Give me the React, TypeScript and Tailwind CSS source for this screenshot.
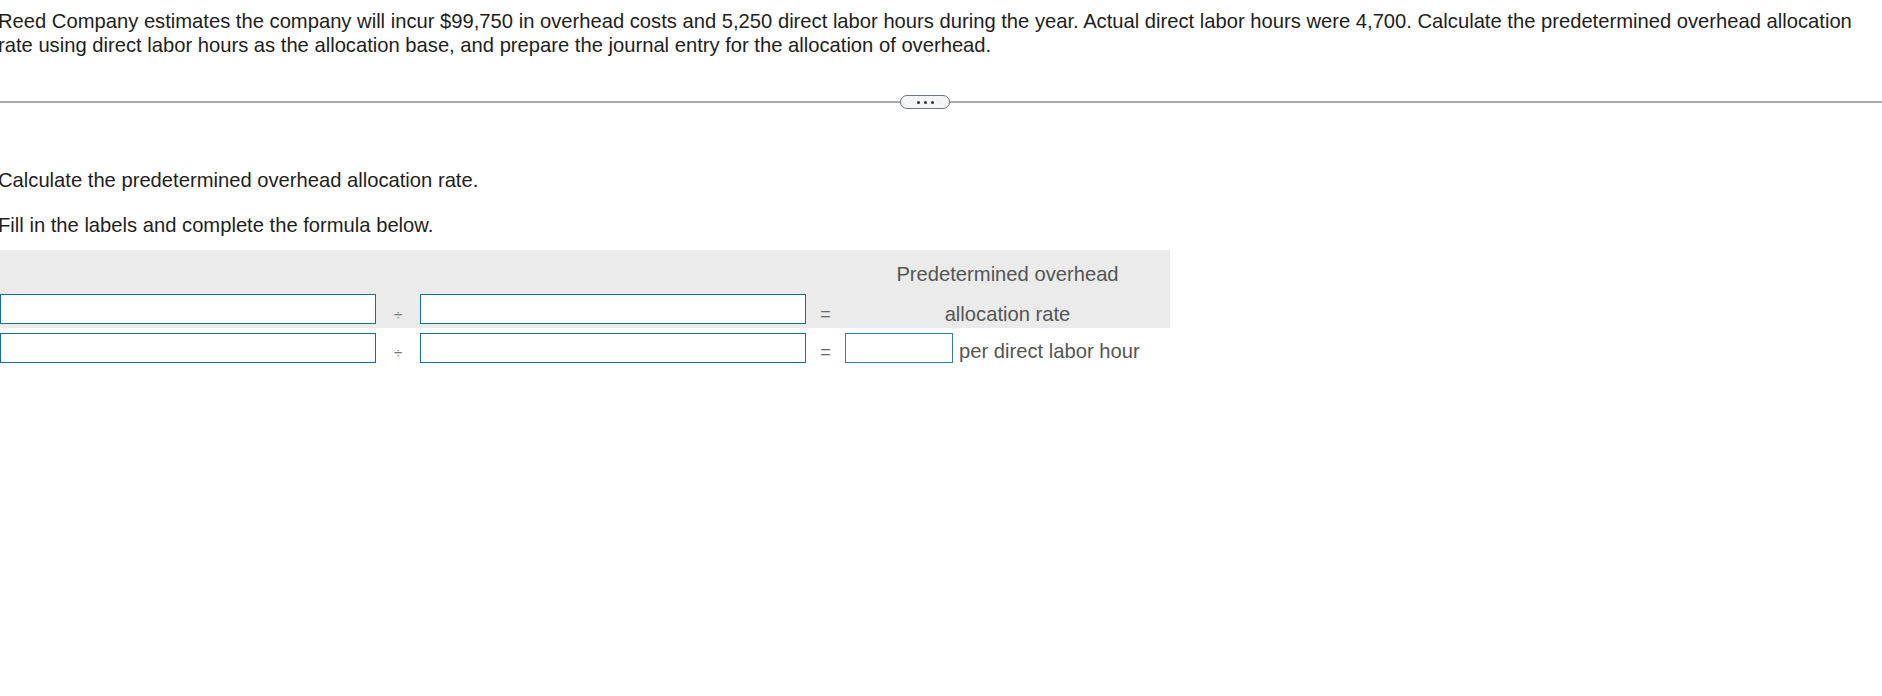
export default function App() {
  return (
    <div className="w-[1882px] h-[696px] bg-white overflow-hidden font-['Liberation_Sans',Arial,sans-serif] text-[#1e1e1e]">
      <p className="pt-[9px] ml-[-2px] w-[1868px] text-[20.2px] leading-[24px]">
        Reed Company estimates the company will incur $99,750 in overhead costs and 5,250 direct labor hours during the year. Actual direct labor hours were 4,700. Calculate the predetermined overhead allocation rate using direct labor hours as the allocation base, and prepare the journal entry for the allocation of overhead.
      </p>

      <div className="mt-[38px] flex items-center h-[14px]">
        <div className="w-[900px] h-[2px] bg-[#a9a9a9]" />
        <button className="w-[50px] h-[14px] rounded-full border border-[#6f757c] bg-[#f3f5f7] flex items-center justify-center gap-[4px]">
          <span className="w-[3px] h-[3px] rounded-full bg-[#333]" />
          <span className="w-[3px] h-[3px] rounded-full bg-[#333]" />
          <span className="w-[3px] h-[3px] rounded-full bg-[#333]" />
        </button>
        <div className="flex-1 h-[2px] bg-[#a9a9a9]" />
      </div>

      <p className="mt-[59px] ml-[-2px] text-[20.2px] leading-[24px]">Calculate the predetermined overhead allocation rate.</p>
      <p className="mt-[21px] ml-[-2px] text-[20.2px] leading-[24px]">Fill in the labels and complete the formula below.</p>

      <div className="mt-[13px] w-[1170px]">
        <div className="flex h-[78px] bg-[#ebebeb]">
          <div className="w-[376px] flex items-end pb-[4px]">
            <input className="w-[376px] h-[30px] bg-white border border-[#136e98] outline-none" />
          </div>
          <div className="w-[44px] flex items-end justify-center pb-[2px] text-[15px] text-[#777]">÷</div>
          <div className="w-[386px] flex items-end pb-[4px]">
            <input className="w-[386px] h-[30px] bg-white border border-[#136e98] outline-none" />
          </div>
          <div className="w-[39px] flex items-end justify-center pb-0 text-[18px] text-[#666]">=</div>
          <div className="w-[325px] flex flex-col items-center pt-[12px] gap-[16px] text-[20.2px] leading-[24px] text-[#555]">
            <span>Predetermined overhead</span>
            <span>allocation rate</span>
          </div>
        </div>

        <div className="flex items-center h-[30px] mt-[5px]">
          <input className="w-[376px] h-[30px] bg-white border border-[#136e98] outline-none" />
          <div className="w-[44px] flex justify-center pt-[11px] text-[15px] text-[#777]">÷</div>
          <input className="w-[386px] h-[30px] bg-white border border-[#136e98] outline-none" />
          <div className="w-[39px] flex justify-center pt-[8px] text-[18px] text-[#666]">=</div>
          <div className="w-[325px] flex items-center">
            <input className="w-[108px] h-[30px] bg-white border border-[#2a80a8] outline-none" />
            <span className="ml-[6px] pt-[5px] text-[20.2px] leading-[24px] text-[#555]">per direct labor hour</span>
          </div>
        </div>
      </div>
    </div>
  );
}
